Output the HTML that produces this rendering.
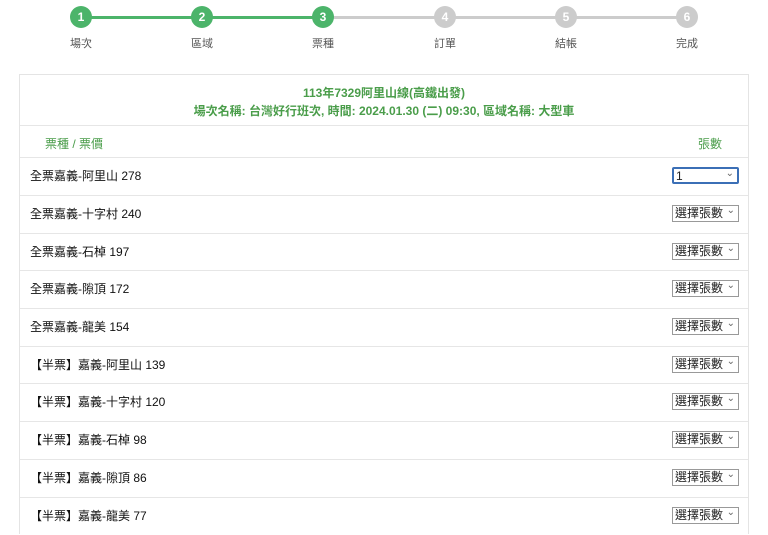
<!DOCTYPE html>
<html><head><meta charset="utf-8"><style>
*{margin:0;padding:0;box-sizing:border-box}
body{width:768px;height:528px;overflow:hidden;background:#fff;font-family:"Liberation Sans","Noto Sans CJK TC",sans-serif;position:relative;color:#222}
.line{position:absolute;top:16px;height:3px}
.c{position:absolute;top:6px;width:22px;height:22px;border-radius:50%;color:#fff;font-size:12px;font-weight:bold;text-align:center;line-height:22px}
.g{background:#4cb46a}.x{background:#ccc}
.lb{position:absolute;top:35px;width:60px;margin-left:-30px;text-align:center;font-size:11px;color:#555}
.box{position:absolute;left:19px;top:74px;width:730px;height:460px;border:1px solid #e4e4e4;border-bottom:none}
.t{position:absolute;left:0;width:100%;text-align:center;color:#4a9d4a;font-size:12px;font-weight:bold}
.row{position:absolute;left:0;width:728px;border-top:1px solid #e6e6e6;height:38px}
.row span{position:absolute;left:10px;top:9px;font-size:12px;color:#111}
.sel{position:absolute;left:652px;top:9px;width:67px;height:17px;border:1px solid #999;font-size:12px;line-height:15px;padding-left:2px;background:#fff}
.sel:after{content:"⌄";position:absolute;right:3px;top:-3px;font-size:10px;color:#666}
</style></head><body>
<div class="line g" style="left:81px;width:242px"></div>
<div class="line x" style="left:323px;width:364px"></div>
<div class="c g" style="left:70px">1</div><div class="c g" style="left:191px">2</div><div class="c g" style="left:312px">3</div>
<div class="c x" style="left:434px">4</div><div class="c x" style="left:555px">5</div><div class="c x" style="left:676px">6</div>
<div class="lb" style="left:81px">場次</div><div class="lb" style="left:202px">區域</div><div class="lb" style="left:323px">票種</div><div class="lb" style="left:445px">訂單</div><div class="lb" style="left:566px">結帳</div><div class="lb" style="left:687px">完成</div>
<div class="box">
<div class="t" style="top:9px">113年7329阿里山線(高鐵出發)</div>
<div class="t" style="top:27px">場次名稱: 台灣好行班次, 時間: 2024.01.30 (二) 09:30, 區域名稱: 大型車</div>
<div class="row" style="top:50px;height:33px"><span style="left:25px;top:9px;color:#4a9d4a">票種 / 票價</span><span style="left:678px;top:9px;color:#4a9d4a">張數</span></div>
<div class="row" style="top:82px"><span>全票嘉義-阿里山 278</span><div class="sel" style="border:2px solid #3b6fb6;border-radius:2px">1</div></div>
<div class="row" style="top:120px"><span>全票嘉義-十字村 240</span><div class="sel">選擇張數</div></div>
<div class="row" style="top:158px"><span>全票嘉義-石棹 197</span><div class="sel">選擇張數</div></div>
<div class="row" style="top:195px"><span>全票嘉義-隙頂 172</span><div class="sel">選擇張數</div></div>
<div class="row" style="top:233px"><span>全票嘉義-龍美 154</span><div class="sel">選擇張數</div></div>
<div class="row" style="top:271px"><span>【半票】嘉義-阿里山 139</span><div class="sel">選擇張數</div></div>
<div class="row" style="top:308px"><span>【半票】嘉義-十字村 120</span><div class="sel">選擇張數</div></div>
<div class="row" style="top:346px"><span>【半票】嘉義-石棹 98</span><div class="sel">選擇張數</div></div>
<div class="row" style="top:384px"><span>【半票】嘉義-隙頂 86</span><div class="sel">選擇張數</div></div>
<div class="row" style="top:422px"><span>【半票】嘉義-龍美 77</span><div class="sel">選擇張數</div></div>
</div>
</body></html>
